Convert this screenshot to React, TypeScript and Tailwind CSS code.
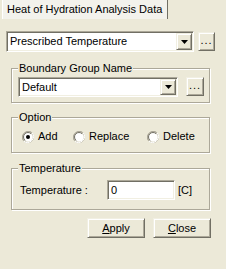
import React from 'react';

const raised =
  'bg-[#ECE9D8] border border-t-[#F1EFE2] border-l-[#F1EFE2] border-r-[#716F64] border-b-[#716F64] shadow-[inset_1px_1px_0_#ffffff,inset_-1px_-1px_0_#ACA899]';
const sunken =
  'bg-white border border-t-[#ACA899] border-l-[#ACA899] border-r-white border-b-white shadow-[inset_1px_1px_0_#716F64,inset_-1px_-1px_0_#F1EFE2]';

function Combo({ value, width, height }: { value: string; width: string; height: string }) {
  return (
    <div className={`${sunken} ${width} ${height} flex items-center pl-[2px] pr-[1px]`}>
      <span className="flex-1 leading-none pl-[1px]">{value}</span>
      <div className={`${raised} w-[16px] h-[calc(100%-2px)] flex items-center justify-center`}>
        <svg width="7" height="4" viewBox="0 0 7 4">
          <polygon points="0,0 7,0 3.5,4" fill="#000" />
        </svg>
      </div>
    </div>
  );
}

function Dots({ w, h }: { w: string; h: string }) {
  return (
    <div className={`${raised} ${w} ${h} flex items-end justify-center pb-[4px]`}>
      <span className="text-[11px] leading-none tracking-[1px]">...</span>
    </div>
  );
}

function Group({ title, className, children }: { title: string; className: string; children: React.ReactNode }) {
  return (
    <div
      className={`relative w-[199px] ml-[11px] border border-[#ACA899] shadow-[inset_1px_1px_0_#ffffff,1px_1px_0_#ffffff] ${className}`}
    >
      <span className="absolute left-[6px] -top-[7px] bg-[#ECE9D8] px-[1px] leading-[12px]">{title}</span>
      {children}
    </div>
  );
}

function Radio({ label, checked, width }: { label: string; checked?: boolean; width: string }) {
  return (
    <div className={`flex items-center ${width}`}>
      <svg width="12" height="12" viewBox="0 0 12 12">
        <path d="M10.2 1.8 A6 6 0 0 0 1.8 10.2" fill="none" stroke="#ACA899" strokeWidth="1" />
        <circle cx="6" cy="6" r="5.5" fill="none" stroke="#ACA899" />
        <circle cx="6" cy="6" r="4.5" fill="#fff" stroke="#716F64" strokeDasharray="14 14" strokeDashoffset="-10" />
        <path d="M1.8 10.2 A6 6 0 0 0 10.2 1.8" fill="none" stroke="#fff" strokeWidth="1" />
        {checked && <circle cx="6" cy="6" r="2" fill="#000" />}
      </svg>
      <span className="ml-[4px] leading-none">{label}</span>
    </div>
  );
}

export default function App() {
  return (
    <div className="w-[226px] h-[269px] bg-[#ECE9D8] text-black text-[11px] font-['Liberation_Sans',Arial,sans-serif] overflow-hidden">
      {/* tab strip */}
      <div className="h-[19px] flex">
        <div className="ml-[2px] w-[166px] h-[19px] bg-[#F3F2EC] border-l border-l-white border-r border-r-[#716F64] pl-[4px] flex items-center">
          <span className="leading-none">Heat of Hydration Analysis Data</span>
        </div>
      </div>

      {/* type combo */}
      <div className="mt-[12px] ml-[6px] flex items-center gap-[4px]">
        <Combo value="Prescribed Temperature" width="w-[188px]" height="h-[21px]" />
        <Dots w="w-[17px]" h="h-[19px]" />
      </div>

      <Group title="Boundary Group Name" className="mt-[16px] h-[35px] pl-[6px] pt-[8px]">
        <div className="flex items-start gap-[8px]">
          <Combo value="Default" width="w-[160px]" height="h-[20px]" />
          <Dots w="w-[18px]" h="h-[19px]" />
        </div>
      </Group>

      <Group title="Option" className="mt-[14px] h-[36px] pl-[10px] pt-[12px]">
        <div className="flex items-center h-[13px]">
          <Radio label="Add" checked width="w-[51px]" />
          <Radio label="Replace" width="w-[74px]" />
          <Radio label="Delete" width="w-[60px]" />
        </div>
      </Group>

      <Group title="Temperature" className="mt-[15px] h-[42px] pl-[8px] pt-[11px]">
        <div className="flex items-center">
          <span className="w-[87px] leading-none">Temperature :</span>
          <div className={`${sunken} w-[68px] h-[20px] flex items-center pl-[3px]`}>
            <span className="leading-none">0</span>
          </div>
          <span className="ml-[3px] leading-none">[C]</span>
        </div>
      </Group>

      <div className="mt-[8px] pr-[15px] flex justify-end gap-[8px]">
        <button className={`${raised} w-[58px] h-[20px] flex items-center justify-center leading-none`}>
          <span>
            <span className="underline">A</span>pply
          </span>
        </button>
        <button className={`${raised} w-[58px] h-[20px] flex items-center justify-center leading-none`}>
          <span>
            <span className="underline">C</span>lose
          </span>
        </button>
      </div>
    </div>
  );
}
